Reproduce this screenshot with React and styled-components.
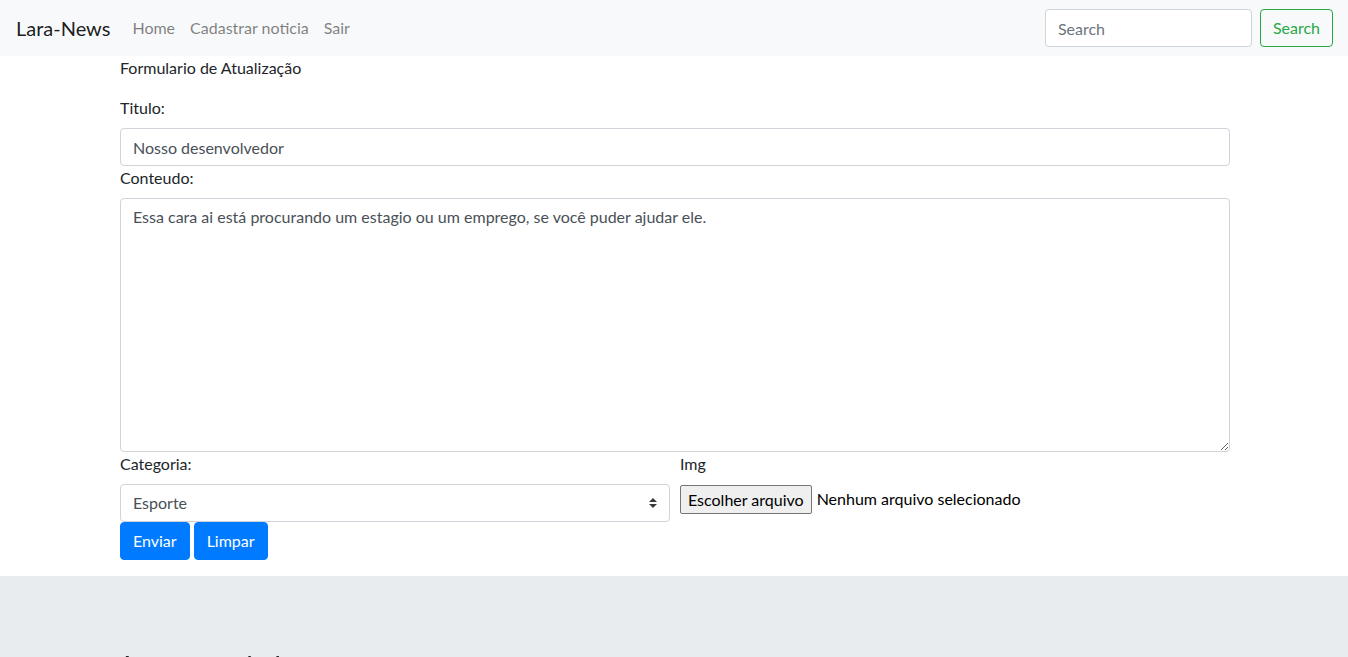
import React from 'react'
import styled, { createGlobalStyle } from 'styled-components'

const GlobalStyle = createGlobalStyle`
  *, *::before, *::after {
    box-sizing: border-box;
  }
  body {
    margin: 0;
    font-family: Lato, "Open Sans", "Liberation Sans", sans-serif;
    font-size: 16px;
    line-height: 1.5;
    color: #212529;
    background: #fff;
  }
`

const Navbar = styled.nav`
  display: flex;
  align-items: center;
  justify-content: space-between;
  height: 56px;
  padding: 8px 15px 8px 16px;
  background: #f8f9fa;
`
const NavLeft = styled.div`
  display: flex;
  align-items: center;
`
const Brand = styled.a`
  font-size: 20px;
  line-height: 30px;
  margin-right: 15px;
  color: rgba(0, 0, 0, 0.9);
  text-decoration: none;
`
const NavLink = styled.a`
  padding: 8px 8px 8px 7px;
  color: rgba(0, 0, 0, 0.5);
  text-decoration: none;
`
const SearchForm = styled.form`
  display: flex;
  align-items: center;
`
const SearchInput = styled.input`
  width: 207px;
  height: 38px;
  padding: 6px 12px;
  margin-right: 8px;
  font: inherit;
  color: #495057;
  border: 1px solid #ced4da;
  border-radius: 4px;
  background: #fff;
  &::placeholder {
    color: #6c757d;
  }
`
const OutlineButton = styled.button`
  height: 38px;
  padding: 6px 12px;
  font: inherit;
  color: #28a745;
  background: transparent;
  border: 1px solid #28a745;
  border-radius: 4px;
`

const Container = styled.div`
  width: 1140px;
  margin: 0 auto;
  padding: 0 14px 0 16px;
`
const Main = styled(Container)`
  padding-bottom: 16px;
`
const Heading = styled.p`
  margin: 0 0 16px;
`
const Label = styled.label`
  display: inline-block;
  margin-bottom: 8px;
`
const Field = styled.input`
  display: block;
  width: 100%;
  height: 38px;
  padding: 6px 12px;
  font: inherit;
  color: #495057;
  background: #fff;
  border: 1px solid #ced4da;
  border-radius: 4px;
`
const TextArea = styled.textarea`
  display: block;
  width: 100%;
  height: 254px;
  padding: 6px 12px;
  font: inherit;
  color: #495057;
  background: #fff;
  border: 1px solid #ced4da;
  border-radius: 4px;
`
const FormRow = styled.div`
  display: flex;
  margin: 0 -5px;
`
const Col = styled.div`
  flex: 1;
  padding: 0 5px;
`
const Select = styled.div`
  display: flex;
  align-items: center;
  justify-content: space-between;
  height: 38px;
  padding: 6px 12px;
  color: #495057;
  background: #fff;
  border: 1px solid #ced4da;
  border-radius: 4px;
`
const FileRow = styled.div`
  display: flex;
  align-items: center;
  gap: 5px;
  height: 32px;
  margin-top: -1px;
`
const FileButton = styled.span`
  padding: 1px 7px;
  line-height: 25px;
  color: #000;
  background: #efefef;
  border: 1px solid #767676;
  border-radius: 2px;
`
const FileText = styled.span`
  color: #000;
`
const Actions = styled.div`
  display: flex;
  gap: 4px;
`
const Button = styled.button`
  height: 38px;
  padding: 6px 12px;
  font: inherit;
  color: #fff;
  background: #007bff;
  border: 1px solid #007bff;
  border-radius: 4px;
`
const Jumbotron = styled.section`
  background: #e9ecef;
  padding: 64px 0;
`
const Display = styled.h1`
  margin: 0;
  font-size: 56px;
  font-weight: 300;
  line-height: 1.2;
`

export default function App() {
  return (
    <>
      <GlobalStyle />
      <Navbar>
        <NavLeft>
          <Brand href="#">Lara-News</Brand>
          <NavLink href="#">Home</NavLink>
          <NavLink href="#">Cadastrar noticia</NavLink>
          <NavLink href="#">Sair</NavLink>
        </NavLeft>
        <SearchForm onSubmit={e => e.preventDefault()}>
          <SearchInput placeholder="Search" />
          <OutlineButton type="button">Search</OutlineButton>
        </SearchForm>
      </Navbar>
      <Main>
        <Heading>Formulario de Atualização</Heading>
        <Label>Titulo:</Label>
        <Field defaultValue="Nosso desenvolvedor" />
        <Label>Conteudo:</Label>
        <TextArea defaultValue="Essa cara ai está procurando um estagio ou um emprego, se você puder ajudar ele." />
        <FormRow>
          <Col>
            <Label>Categoria:</Label>
            <Select>
              <span>Esporte</span>
              <svg width="8" height="10" viewBox="0 0 4 5">
                <path d="M2 0L0 2h4zm0 5L0 3h4z" fill="#343a40" />
              </svg>
            </Select>
          </Col>
          <Col>
            <Label>Img</Label>
            <FileRow>
              <FileButton>Escolher arquivo</FileButton>
              <FileText>Nenhum arquivo selecionado</FileText>
            </FileRow>
          </Col>
        </FormRow>
        <Actions>
          <Button type="button">Enviar</Button>
          <Button type="button">Limpar</Button>
        </Actions>
      </Main>
      <Jumbotron>
        <Container>
          <Display>Lara-News</Display>
        </Container>
      </Jumbotron>
    </>
  )
}
